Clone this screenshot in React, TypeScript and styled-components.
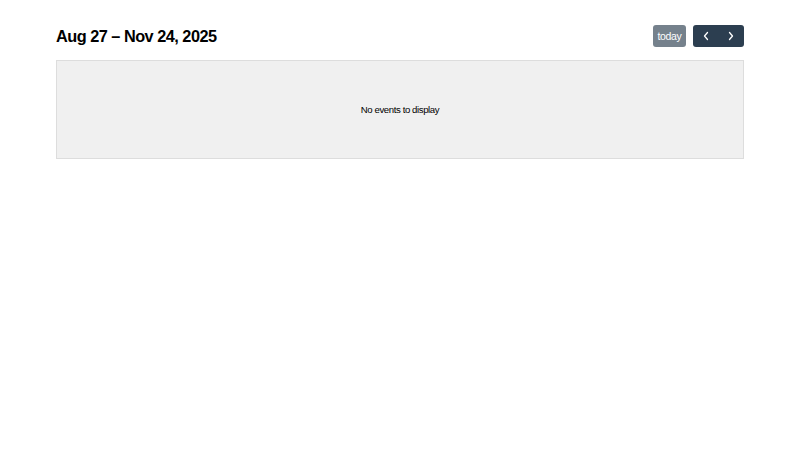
import React from 'react'
import styled, { createGlobalStyle } from 'styled-components'

const Global = createGlobalStyle`
  html, body {
    margin: 0;
    padding: 0;
    background: #fff;
    font-family: "Liberation Sans", Arial, sans-serif;
  }
`

const Page = styled.div`
  padding: 25px 56px;
`

const Toolbar = styled.div`
  display: flex;
  align-items: center;
  justify-content: space-between;
  height: 22px;
  margin-bottom: 13px;
`

const Title = styled.h2`
  margin: 0;
  font-size: 16.3px;
  letter-spacing: -0.5px;
  font-weight: 700;
  color: #000;
  line-height: 22px;
`

const Actions = styled.div`
  display: flex;
  align-items: center;
  gap: 7px;
`

const Group = styled.div`
  display: flex;
`

const Button = styled.button<{ $disabled?: boolean; $pos?: 'left' | 'right' }>`
  height: 22px;
  padding: 0;
  width: ${(p) => (p.$pos ? '25.5px' : '33px')};
  display: flex;
  align-items: center;
  justify-content: center;
  border: none;
  background: #2c3e50;
  color: #fff;
  font-family: "Liberation Sans", Arial, sans-serif;
  font-size: 10.5px;
  letter-spacing: -0.35px;
  border-radius: ${(p) =>
    p.$pos === 'left' ? '3px 0 0 3px' : p.$pos === 'right' ? '0 3px 3px 0' : '3px'};
  opacity: ${(p) => (p.$disabled ? 0.65 : 1)};
  cursor: pointer;
`

const Grid = styled.div`
  height: 99px;
  box-sizing: border-box;
  border: 1px solid #dddddd;
  background: #f0f0f0;
  display: flex;
  align-items: center;
  justify-content: center;
`

const Empty = styled.div`
  font-size: 9.6px;
  letter-spacing: -0.4px;
  color: #000;
  padding-bottom: 1px;
`

function Chevron({ dir }: { dir: 'left' | 'right' }) {
  return (
    <svg width="8" height="10" viewBox="0 0 8 10" fill="none">
      <path
        d={dir === 'left' ? 'M5.5 1.5 L2.5 5 L5.5 8.5' : 'M2.5 1.5 L5.5 5 L2.5 8.5'}
        stroke="#fff"
        strokeWidth="1.3"
        strokeLinecap="round"
        strokeLinejoin="round"
      />
    </svg>
  )
}

export default function App() {
  return (
    <>
      <Global />
      <Page>
        <Toolbar>
          <Title>Aug 27 – Nov 24, 2025</Title>
          <Actions>
            <Button $disabled>today</Button>
            <Group>
              <Button $pos="left">
                <Chevron dir="left" />
              </Button>
              <Button $pos="right">
                <Chevron dir="right" />
              </Button>
            </Group>
          </Actions>
        </Toolbar>
        <Grid>
          <Empty>No events to display</Empty>
        </Grid>
      </Page>
    </>
  )
}
